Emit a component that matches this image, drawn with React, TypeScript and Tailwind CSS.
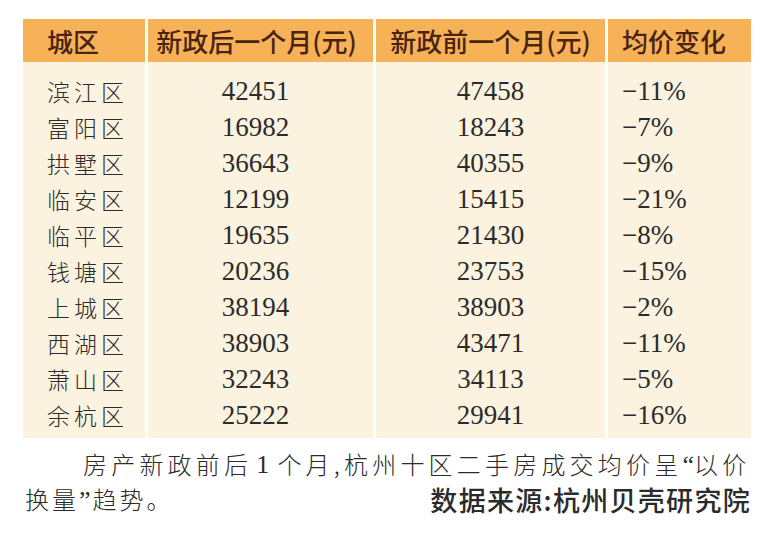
import React from "react";

const rows: [string, string, string, string][] = [
  ["滨江区", "42451", "47458", "−11%"],
  ["富阳区", "16982", "18243", "−7%"],
  ["拱墅区", "36643", "40355", "−9%"],
  ["临安区", "12199", "15415", "−21%"],
  ["临平区", "19635", "21430", "−8%"],
  ["钱塘区", "20236", "23753", "−15%"],
  ["上城区", "38194", "38903", "−2%"],
  ["西湖区", "38903", "43471", "−11%"],
  ["萧山区", "32243", "34113", "−5%"],
  ["余杭区", "25222", "29941", "−16%"],
];

const sans = "font-['Noto_Sans_CJK_SC',sans-serif]";
const serifNum = "font-['Liberation_Serif','Noto_Sans_CJK_SC',serif]";

export default function App() {
  return (
    <div className="w-[771px] h-[560px] bg-white pt-[19px] pl-[23px]">
      <div className="w-[728px] grid grid-cols-[122px_225px_229px_143px] gap-x-[3px]">
        {/* header */}
        <div className={`bg-[#f7b258] h-[43px] flex items-center pl-[24px] text-[26px] font-medium text-[#4a2413] ${sans}`}>城区</div>
        <div className={`bg-[#f7b258] h-[43px] flex items-center justify-center pr-[8px] text-[26px] font-medium text-[#4a2413] ${sans}`}>新政后一个月(元)</div>
        <div className={`bg-[#f7b258] h-[43px] flex items-center justify-center text-[26px] font-medium text-[#4a2413] ${sans}`}>新政前一个月(元)</div>
        <div className={`bg-[#f7b258] h-[43px] flex items-center pl-[14px] text-[26px] font-medium text-[#4a2413] ${sans}`}>均价变化</div>
        {/* body columns */}
        <div className={`bg-[#fbf3e0] pt-[11px] pb-[5px] pl-[24px] text-[23px] text-[#2b2b2b] tracking-[4px] ${sans} font-light`}>
          {rows.map((r) => (
            <div key={r[0]} className="h-[36px] flex items-center">{r[0]}</div>
          ))}
        </div>
        <div className={`bg-[#fbf3e0] pt-[11px] pb-[5px] pr-[10px] text-[27px] text-[#2b2b2b] ${serifNum}`}>
          {rows.map((r) => (
            <div key={r[0]} className="h-[36px] flex items-center justify-center">{r[1]}</div>
          ))}
        </div>
        <div className={`bg-[#fbf3e0] pt-[11px] pb-[5px] text-[27px] text-[#2b2b2b] ${serifNum}`}>
          {rows.map((r) => (
            <div key={r[0]} className="h-[36px] flex items-center justify-center">{r[2]}</div>
          ))}
        </div>
        <div className={`bg-[#fbf3e0] pt-[11px] pb-[5px] pl-[14px] text-[27px] text-[#2b2b2b] ${serifNum}`}>
          {rows.map((r) => (
            <div key={r[0]} className="h-[36px] flex items-center">{r[3]}</div>
          ))}
        </div>
      </div>
      {/* caption */}
      <div className="w-[728px] pt-[8px] text-[#2b2b2b]">
        <div className={`h-[36px] flex items-center pl-[60px] text-[24px] tracking-[4.2px] font-light whitespace-nowrap ${sans}`}>
          房产新政前后<span className={`${serifNum} text-[26px] mx-[4px]`}>1</span>个月,杭州十区二手房成交均价呈<span className={`${serifNum} text-[26px] tracking-[0px]`}>“</span>以价
        </div>
        <div className="h-[36px] flex items-center justify-between pl-[2px]">
          <span className={`text-[24px] tracking-[3px] font-light ${sans}`}>换量<span className={`${serifNum} text-[26px] tracking-[0px] mr-[2px]`}>”</span>趋势。</span>
          <span className={`text-[27px] font-medium tracking-[1.3px] ${sans}`}>数据来源:杭州贝壳研究院</span>
        </div>
      </div>
    </div>
  );
}
